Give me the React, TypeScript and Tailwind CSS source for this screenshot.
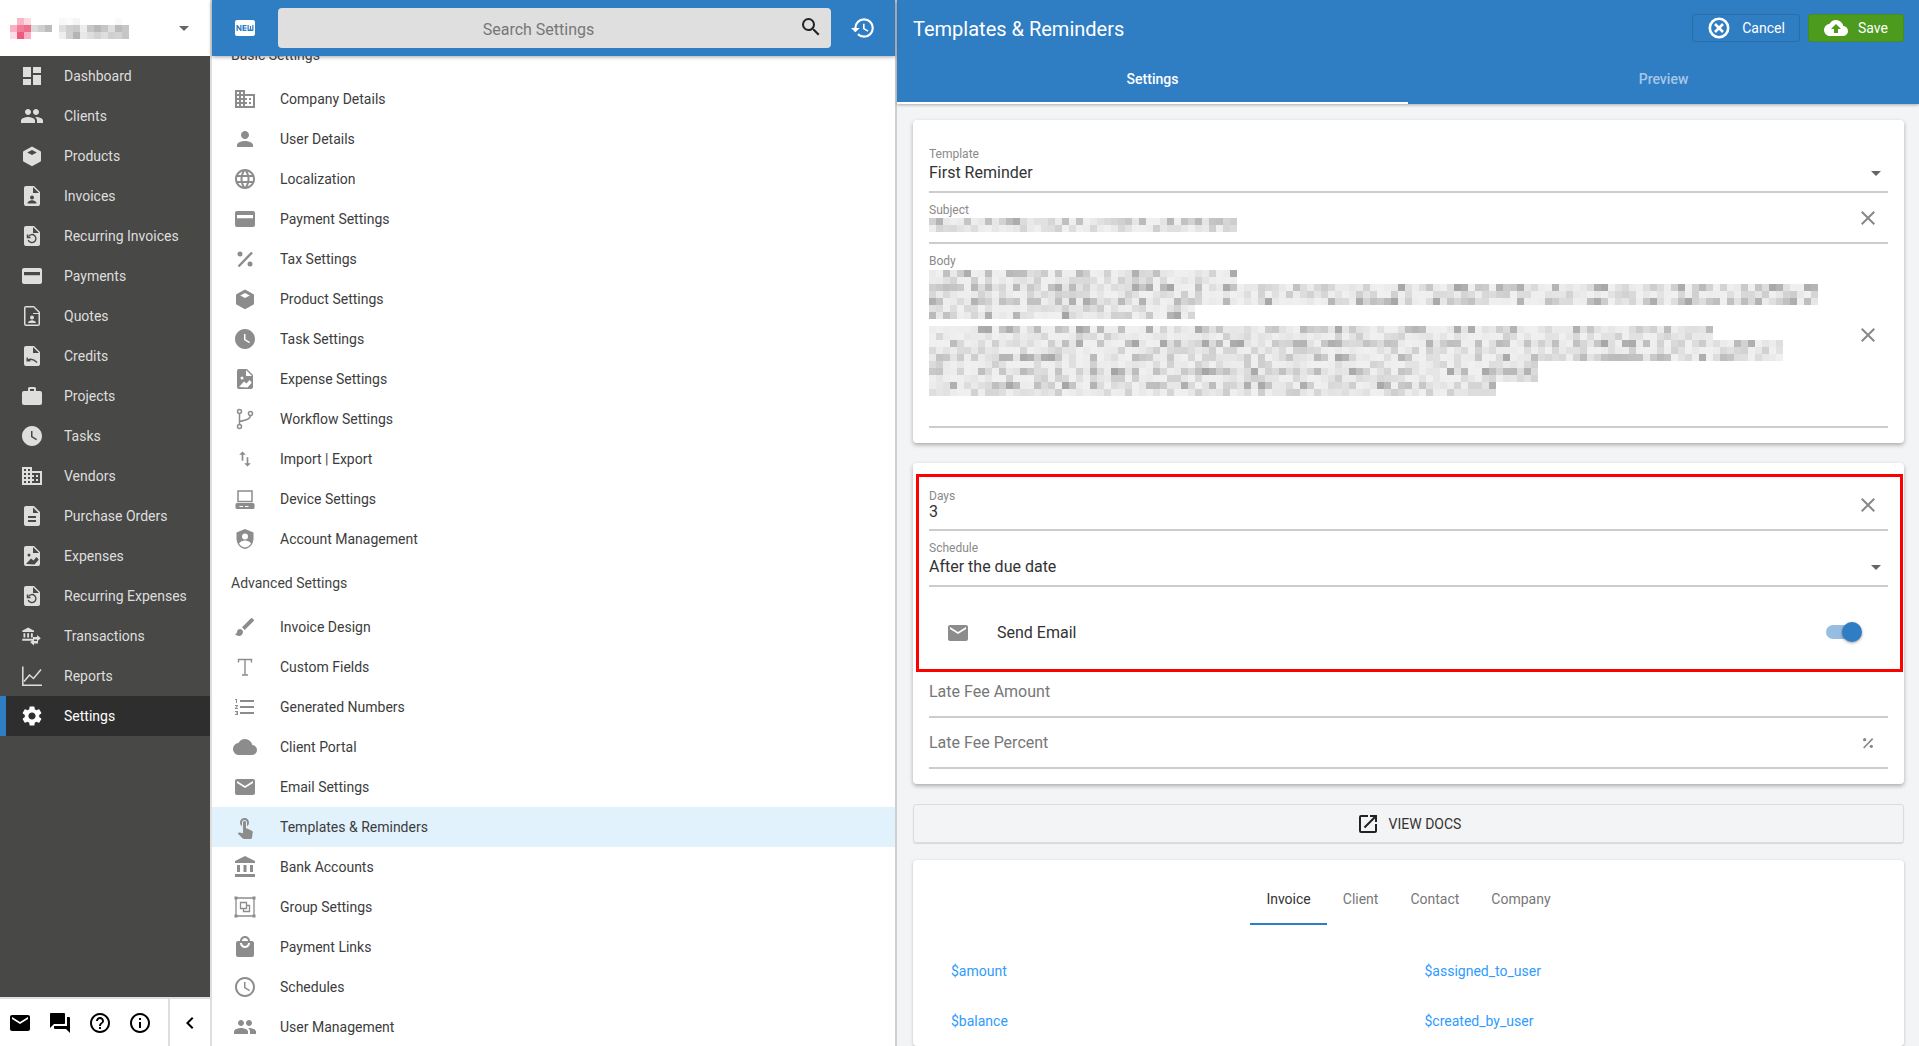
import { useId, type ReactNode } from "react";
import {
  MdAccessTime,
  MdAccountBalance,
  MdArrowDropDown,
  MdBrush,
  MdBusiness,
  MdChevronLeft,
  MdClose,
  MdCloud,
  MdCloudUpload,
  MdDashboard,
  MdDescription,
  MdEmail,
  MdFiberNew,
  MdForum,
  MdFormatListNumbered,
  MdHelpOutline,
  MdHistory,
  MdImportExport,
  MdInfoOutline,
  MdLanguage,
  MdLocalMall,
  MdOpenInNew,
  MdPeople,
  MdPerson,
  MdSearch,
  MdSettings,
  MdTouchApp,
  MdWatchLater,
} from "react-icons/md";

// ---- hand drawn icons, for what the icon packages don't have

function Svg({ children, size = 24 }: { children: ReactNode; size?: number }) {
  return (
    <svg width={size} height={size} viewBox="0 0 24 24" fill="currentColor">
      {children}
    </svg>
  );
}

function Cube() {
  return (
    <Svg>
      <path
        fillRule="evenodd"
        d="M12 2.5l8.2 4.4c.5.3.8.7.8 1.3v8.2c0 .6-.3 1-.8 1.3L12 22.2l-8.2-4.5c-.5-.3-.8-.7-.8-1.3V8.200c0-.6.3-1 .8-1.3L12 2.5zM12 6L7.200 8.500 12 11l4.800-2.500L12 6z"
      />
    </Svg>
  );
}

function Card() {
  return (
    <Svg>
      <path
        fillRule="evenodd"
        d="M4 4h16a2 2 0 0 1 2 2v12a2 2 0 0 1-2 2H4a2 2 0 0 1-2-2V6a2 2 0 0 1 2-2zm0 4v3.200h16V8H4z"
      />
    </Svg>
  );
}

function PercentIcon({ size = 24 }: { size?: number }) {
  return (
    <Svg size={size}>
      <circle cx="7" cy="7" r="2.500" />
      <circle cx="17" cy="17" r="2.500" />
      <path d="M5.500 19.500L19 5.500" stroke="currentColor" strokeWidth="2.400" />
    </Svg>
  );
}

function CancelIcon() {
  return (
    <svg width="24" height="24" viewBox="0 0 24 24" fill="none" stroke="currentColor" strokeWidth="2.600">
      <circle cx="12" cy="12" r="9.200" />
      <path d="M8 8l8 8M16 8l-8 8" />
    </svg>
  );
}

type FileKind = "person" | "framed" | "recurring" | "credit" | "image";

function FileIcon({ kind }: { kind: FileKind }) {
  const id = useId();
  return (
    <Svg>
      <mask id={id}>
        <rect width="24" height="24" fill="#fff" />
        <path d="M13 3v6h6z" fill="#000" />
        {kind === "person" && (
          <>
            <circle cx="12" cy="13.500" r="2" fill="#000" />
            <path d="M7.500 19.500c0-2.200 2.800-3.200 4.500-3.200s4.500 1 4.500 3.200z" fill="#000" />
          </>
        )}
        {kind === "framed" && (
          <>
            <path d="M5.500 3.500H13V10h5.500v10.500h-13z" fill="#000" />
            <circle cx="12" cy="13.500" r="2" fill="#fff" />
            <path d="M8 19c0-2 2.600-2.800 4-2.800s4 .8 4 2.800z" fill="#fff" />
          </>
        )}
        {kind === "recurring" && (
          <g fill="none" stroke="#000" strokeWidth="1.400">
            <path d="M8.500 12.500a4 4 0 1 1-.3 3.500" />
            <path d="M7.500 10.500v3h3" />
          </g>
        )}
        {kind === "credit" && (
          <g fill="none" stroke="#000" strokeWidth="1.400">
            <path d="M7 16.500c3-2 6.500-1.800 10 2" />
            <path d="M7.200 13.500v3.200h3.200" />
          </g>
        )}
        {kind === "image" && (
          <>
            <circle cx="9" cy="11" r="1.500" fill="#000" />
            <path d="M6 20l5-5.500 2.500 2 3-3.500 2 2.200V16l-4 4.500z" fill="#000" />
          </>
        )}
      </mask>
      <path
        mask={`url(#${id})`}
        d="M6 2h8l6 6v12a2 2 0 0 1-2 2H6a2 2 0 0 1-2-2V4a2 2 0 0 1 2-2z"
      />
    </Svg>
  );
}

function Transactions() {
  return (
    <Svg>
      <path
        transform="translate(1 3) scale(.62)"
        d="M4 10v7h3v-7H4zm6 0v7h3v-7h-3zM2 22h19v-3H2v3zm14-12v7h3v-7h-3zm-4.500-9L2 6v2h19V6l-9.500-5z"
      />
      <path d="M17 11l3.800 3.200L17 17.400V15.400h-4v-2.400h4z" />
      <path d="M14 15l-3.800 3.200 3.800 3.200v-2h4V17h-4z" />
    </Svg>
  );
}

function Reports() {
  return (
    <Svg>
      <g fill="none" stroke="currentColor" strokeWidth="1.500">
        <path d="M2.800 2.500v18.700H22" />
        <path d="M4 17.500l5.500-6.500 4 3.500 7.500-9" />
      </g>
    </Svg>
  );
}

function Device() {
  return (
    <Svg>
      <path d="M5 4h14v10.500H5z" fill="none" stroke="currentColor" strokeWidth="1.500" />
      <path
        fillRule="evenodd"
        d="M4 16h16a1.500 1.500 0 0 1 1.500 1.500v3A1.500 1.500 0 0 1 20 22H4a1.500 1.500 0 0 1-1.500-1.500v-3A1.500 1.500 0 0 1 4 16zm2.500 3v1H10v-1H6.500zm5.500 0v1h3.500v-1H12z"
      />
    </Svg>
  );
}

function Shield() {
  const id = useId();
  return (
    <Svg>
      <mask id={id}>
        <rect width="24" height="24" fill="#fff" />
        <circle cx="12" cy="9.500" r="3" fill="#000" />
        <path
          d="M6 16.800c1-2.300 3.800-3.200 6-3.200s5 .9 6 3.200c-1.300 1.900-3.500 3.300-6 3.800-2.500-.5-4.700-1.900-6-3.800z"
          fill="#000"
        />
      </mask>
      <path mask={`url(#${id})`} d="M12 2l8.500 3.400v6c0 5.200-3.600 9.600-8.500 10.600-4.900-1-8.500-5.400-8.500-10.600v-6z" />
    </Svg>
  );
}

function Serif() {
  return (
    <Svg>
      <path
        d="M5.500 7.500V4.500h13v3M12 4.500v15.500M9 20h6"
        fill="none"
        stroke="currentColor"
        strokeWidth="1.400"
      />
    </Svg>
  );
}

function GroupBox() {
  return (
    <Svg>
      <g fill="none" stroke="currentColor" strokeWidth="1.300">
        <path d="M3 3h18v18H3z" />
        <path d="M7.500 7.500h6v6h-6z" />
        <path d="M10.500 13.500v3h6v-6h-3" />
      </g>
      <path d="M1.500 1.500h3v3h-3zM19.500 1.500h3v3h-3zM1.500 19.500h3v3h-3zM19.500 19.500h3v3h-3z" />
    </Svg>
  );
}

function Branch() {
  return (
    <Svg>
      <g fill="none" stroke="currentColor" strokeWidth="1.500">
        <circle cx="6.500" cy="4.500" r="2" />
        <circle cx="6.500" cy="19.500" r="2" />
        <circle cx="17.500" cy="6.500" r="2" />
        <path d="M6.500 6.500v11M17.500 8.500c0 3.500-4 4.500-11 6" />
      </g>
    </Svg>
  );
}

function Briefcase() {
  return (
    <Svg>
      <path
        fillRule="evenodd"
        d="M4 7h4V4.500A1.500 1.500 0 0 1 9.500 3h5A1.500 1.500 0 0 1 16 4.500V7h4a2 2 0 0 1 2 2v10a2 2 0 0 1-2 2H4a2 2 0 0 1-2-2V9a2 2 0 0 1 2-2zm6-2v2h4V5h-4z"
      />
    </Svg>
  );
}

// ---- blurred (pixelated) parts of the screenshot

function Mosaic({ rows, seed, width }: { rows: number[]; seed: number; width: number }) {
  const cell = 7;
  let s = seed;
  const next = () => {
    s = (s * 9301 + 49297) % 233280;
    return s / 233280;
  };
  const cells: ReactNode[] = [];
  rows.forEach((w, y) => {
    const strength = y % 2 === 0 ? 75 : 35;
    for (let x = 0; x * cell < w; x++) {
      const r = next();
      const g = Math.round(252 - r * r * strength - 12);
      cells.push(
        <rect
          key={`${x}-${y}`}
          x={x * cell}
          y={y * cell}
          width={cell}
          height={cell}
          fill={`rgb(${g},${g},${g})`}
        />,
      );
    }
  });
  return (
    <svg width={width} height={rows.length * cell} shapeRendering="crispEdges" className="block">
      {cells}
    </svg>
  );
}

function Logo() {
  const pink = [
    [null, "#f9b6c6", "#fcd9e1", null, null, null],
    ["#f9b0c2", "#f27e9a", "#ef6f8f", "#dcdcdc", "#cfcfcf", "#bcbcbc"],
    ["#fcdde4", "#ee5a7e", "#f9b0c2", null, null, null],
  ];
  const grey = [
    ["#f8f8f8", "#fbfbfb", "#f5f5f5", "#fff", "#fff", "#fff", "#fff", "#fff", "#fafafa", "#fff"],
    ["#dedede", "#cfcfcf", "#cacaca", "#ededed", "#c6c6c6", "#b8b8b8", "#c6c6c6", "#dedede", "#bbb", "#c6c6c6"],
    ["#eee", "#d0d0d0", "#b4b4b4", "#e8e8e8", "#dedede", "#d3d3d3", "#dedede", "#cfcfcf", "#d3d3d3", "#c6c6c6"],
  ];
  return (
    <div className="flex gap-[7px]">
      <div className="grid grid-cols-[repeat(6,7px)] auto-rows-[7px]">
        {pink.flat().map((c, i) => (
          <div key={i} style={{ backgroundColor: c ?? "transparent" }} />
        ))}
      </div>
      <div className="grid grid-cols-[repeat(10,7px)] auto-rows-[7px]">
        {grey.flat().map((c, i) => (
          <div key={i} style={{ backgroundColor: c }} />
        ))}
      </div>
    </div>
  );
}

// ---- data

const navItems: { label: string; icon: ReactNode }[] = [
  { label: "Dashboard", icon: <MdDashboard size={24} /> },
  { label: "Clients", icon: <MdPeople size={24} /> },
  { label: "Products", icon: <Cube /> },
  { label: "Invoices", icon: <FileIcon kind="person" /> },
  { label: "Recurring Invoices", icon: <FileIcon kind="recurring" /> },
  { label: "Payments", icon: <Card /> },
  { label: "Quotes", icon: <FileIcon kind="framed" /> },
  { label: "Credits", icon: <FileIcon kind="credit" /> },
  { label: "Projects", icon: <Briefcase /> },
  { label: "Tasks", icon: <MdWatchLater size={24} /> },
  { label: "Vendors", icon: <MdBusiness size={24} /> },
  { label: "Purchase Orders", icon: <MdDescription size={24} /> },
  { label: "Expenses", icon: <FileIcon kind="image" /> },
  { label: "Recurring Expenses", icon: <FileIcon kind="recurring" /> },
  { label: "Transactions", icon: <Transactions /> },
  { label: "Reports", icon: <Reports /> },
];

const basicSettings: { label: string; icon: ReactNode }[] = [
  { label: "Company Details", icon: <MdBusiness size={24} /> },
  { label: "User Details", icon: <MdPerson size={24} /> },
  { label: "Localization", icon: <MdLanguage size={24} /> },
  { label: "Payment Settings", icon: <Card /> },
  { label: "Tax Settings", icon: <PercentIcon /> },
  { label: "Product Settings", icon: <Cube /> },
  { label: "Task Settings", icon: <MdWatchLater size={24} /> },
  { label: "Expense Settings", icon: <FileIcon kind="image" /> },
  { label: "Workflow Settings", icon: <Branch /> },
  { label: "Import | Export", icon: <MdImportExport size={20} /> },
  { label: "Device Settings", icon: <Device /> },
  { label: "Account Management", icon: <Shield /> },
];

const advancedSettings: { label: string; icon: ReactNode; active?: boolean }[] = [
  { label: "Invoice Design", icon: <MdBrush size={24} /> },
  { label: "Custom Fields", icon: <Serif /> },
  { label: "Generated Numbers", icon: <MdFormatListNumbered size={24} /> },
  { label: "Client Portal", icon: <MdCloud size={24} /> },
  { label: "Email Settings", icon: <MdEmail size={24} /> },
  { label: "Templates & Reminders", icon: <MdTouchApp size={24} />, active: true },
  { label: "Bank Accounts", icon: <MdAccountBalance size={24} /> },
  { label: "Group Settings", icon: <GroupBox /> },
  { label: "Payment Links", icon: <MdLocalMall size={24} /> },
  { label: "Schedules", icon: <MdAccessTime size={24} /> },
  { label: "User Management", icon: <MdPeople size={24} /> },
];

function SettingsRow({ label, icon, active }: { label: string; icon: ReactNode; active?: boolean }) {
  return (
    <div className={`h-10 flex items-center ${active ? "bg-[#e1f2fc]" : ""}`}>
      <div className="w-[64px] flex justify-center pl-[2px] text-[#8c8c8c] shrink-0">{icon}</div>
      <span className="ml-[4px] text-sm text-[#3c3c3c]">{label}</span>
    </div>
  );
}

function Label({ children }: { children: ReactNode }) {
  return <div className="text-xs leading-[14px] text-[#8a8a8a]">{children}</div>;
}

function ClearIcon() {
  return <MdClose size={24} className="text-[#888] mr-[8px] shrink-0" />;
}

function DropArrow() {
  return <MdArrowDropDown size={24} className="text-[#666] shrink-0" />;
}

export default function App() {
  return (
    <div className="flex h-screen overflow-hidden bg-white text-[#333] font-['Roboto',sans-serif]">
      {/* Sidebar */}
      <aside className="w-[212px] shrink-0 flex flex-col border-r-2 border-[#dedede] bg-[#484846]">
        <div className="h-14 shrink-0 bg-white flex items-center justify-between pl-[10px] pr-[14px]">
          <Logo />
          <MdArrowDropDown size={24} className="text-[#666]" />
        </div>
        <nav className="flex-1">
          {navItems.map((item) => (
            <div key={item.label} className="h-10 flex items-center text-[#dedede]">
              <div className="w-[64px] flex justify-center shrink-0">{item.icon}</div>
              <span className="text-sm">{item.label}</span>
            </div>
          ))}
          <div className="h-10 flex items-center bg-[#2e2e2e] text-white border-l-[6px] border-[#2f7dc3]">
            <div className="w-[52px] flex justify-center shrink-0">
              <MdSettings size={24} />
            </div>
            <span className="ml-[6px] text-sm">Settings</span>
          </div>
        </nav>
        <div className="h-[49px] shrink-0 bg-white border-t-2 border-[#dedede] flex items-center text-black">
          <div className="w-[170px] flex items-center justify-around pt-[1px] pr-[8px] border-r-2 border-[#dedede] h-full">
            <MdEmail size={24} />
            <MdForum size={24} />
            <MdHelpOutline size={24} />
            <MdInfoOutline size={24} />
          </div>
          <div className="flex-1 flex justify-center">
            <MdChevronLeft size={24} />
          </div>
        </div>
      </aside>

      {/* Settings list */}
      <section className="w-[685px] shrink-0 flex flex-col border-r-2 border-[#cfcfcf]">
        <header className="relative z-10 h-14 shrink-0 bg-[#2f7dc3] flex items-center shadow-[0_1px_4px_rgba(0,0,0,0.35)]">
          <div className="w-[66px] flex justify-center text-white">
            <MdFiberNew size={24} />
          </div>
          <div className="w-[553px] h-10 bg-[#dfdfdf] rounded-sm flex items-center justify-center pt-[3px] pr-[32px] relative">
            <span className="text-base text-[#777]">Search Settings</span>
            <MdSearch size={24} className="absolute right-[8px] top-[7px] text-[#222]" />
          </div>
          <div className="flex-1 flex justify-center text-white">
            <MdHistory size={26} />
          </div>
        </header>
        <div className="-mt-[25px] overflow-hidden">
          <div className="h-12 flex items-center pl-[19px] text-sm text-[#444]">Basic Settings</div>
          {basicSettings.map((row) => (
            <SettingsRow key={row.label} {...row} />
          ))}
          <div className="h-12 flex items-center pl-[19px] text-sm text-[#444]">Advanced Settings</div>
          {advancedSettings.map((row) => (
            <SettingsRow key={row.label} {...row} />
          ))}
        </div>
      </section>

      {/* Editor */}
      <main className="flex-1 min-w-0 flex flex-col bg-[#f3f4f6]">
        <header className="h-[104px] shrink-0 bg-[#2f7dc3] shadow-[0_1px_3px_rgba(0,0,0,0.3)] text-white">
          <div className="h-14 flex items-center justify-between pl-[16px] pr-[15px]">
            <h1 className="text-xl font-normal pt-[2px]">Templates &amp; Reminders</h1>
            <div className="flex gap-[8px]">
              <button className="w-[108px] h-[28px] rounded-[3px] border border-[#2a6ea9] flex items-center justify-center gap-[11px] text-sm">
                <CancelIcon />
                Cancel
              </button>
              <button className="w-[96px] h-[28px] rounded-[3px] bg-[#4c9a1e] border border-[#468c1c] flex items-center justify-center gap-[10px] text-sm">
                <MdCloudUpload size={24} />
                Save
              </button>
            </div>
          </div>
          <div className="h-[48px] grid grid-cols-2 text-sm font-medium">
            <div className="flex items-center justify-center border-b-2 border-white">Settings</div>
            <div className="flex items-center justify-center pb-[2px] text-[#a6c8e8]">Preview</div>
          </div>
        </header>

        <div className="flex-1 overflow-hidden pt-[16px] pl-[16px] pr-[15px]">
          {/* Template card */}
          <div className="bg-white rounded-sm px-[16px] pb-[15px] shadow-[0_2px_4px_rgba(0,0,0,0.3)]">
            <div className="h-[73px] pt-[27px] border-b-2 border-[#ccc]">
              <Label>Template</Label>
              <div className="mt-[2px] h-5 flex items-center justify-between">
                <span className="text-base text-[#333]">First Reminder</span>
                <DropArrow />
              </div>
            </div>
            <div className="h-[51px] border-b-2 border-[#ccc] flex items-center justify-between">
              <div>
                <Label>Subject</Label>
                <div className="mt-px">
                  <Mosaic rows={[302, 302]} seed={11} width={310} />
                </div>
              </div>
              <ClearIcon />
            </div>
            <div className="h-[184px] pt-[10px] border-b-2 border-[#ccc] flex items-center justify-between">
              <div className="self-start">
                <Label>Body</Label>
                <div className="mt-[2px]">
                  <Mosaic
                    rows={[307, 307, 887, 887, 887, 263, 263, 0, 782, 782, 851, 851, 851, 604, 604, 604, 565, 565]}
                    seed={77}
                    width={900}
                  />
                </div>
              </div>
              <div className="-mt-[10px]">
                <ClearIcon />
              </div>
            </div>
          </div>

          {/* Schedule card */}
          <div className="relative mt-[20px] bg-white rounded-sm px-[16px] pb-[15px] shadow-[0_2px_4px_rgba(0,0,0,0.3)]">
            <div className="h-[68px] pt-[18px] border-b-2 border-[#ccc] flex items-center justify-between">
              <div className="self-start pt-[8px]">
                <Label>Days</Label>
                <div className="text-base leading-[18px] text-[#333]">3</div>
              </div>
              <ClearIcon />
            </div>
            <div className="h-[56px] pt-[10px] border-b-2 border-[#ccc]">
              <Label>Schedule</Label>
              <div className="mt-[2px] h-5 flex items-center justify-between">
                <span className="text-base text-[#333]">After the due date</span>
                <DropArrow />
              </div>
            </div>
            <div className="h-[90px] flex items-center justify-between">
              <div className="flex items-center pt-[2px]">
                <div className="w-[56px] flex justify-center pl-[1px] text-[#8c8c8c]">
                  <MdEmail size={24} />
                </div>
                <span className="ml-[12px] text-base text-[#333]">Send Email</span>
              </div>
              <div className="relative w-[36px] h-[20px] mr-[26px] flex items-center">
                <div className="w-[30px] h-[14px] rounded-full bg-[#98bde2]" />
                <div className="absolute right-0 w-5 h-5 rounded-full bg-[#2f7dc3] shadow-[0_1px_3px_rgba(0,0,0,0.4)]" />
              </div>
            </div>
            <div className="h-[41px] pt-[3px] border-b-2 border-[#ccc] text-base text-[#777]">Late Fee Amount</div>
            <div className="h-[51px] border-b-2 border-[#ccc] flex items-center justify-between text-base text-[#777]">
              Late Fee Percent
              <div className="text-[#888] mr-[12px] flex">
                <PercentIcon size={16} />
              </div>
            </div>
            {/* annotation frame of the screenshot */}
            <div className="absolute left-[3px] right-[1px] top-[11px] h-[198px] border-[3px] border-[#ff0000] pointer-events-none" />
          </div>

          <button className="mt-[20px] w-full h-[39px] rounded-[3px] border border-[#dcdcdc] shadow-[0_1px_1px_rgba(0,0,0,0.12)] flex items-center justify-center gap-[9px] text-sm text-[#333]">
            <MdOpenInNew size={24} className="text-[#222]" />
            VIEW DOCS
          </button>

          {/* Variables card */}
          <div className="mt-[17px] bg-white rounded-sm pt-[15px] shadow-[0_1px_3px_rgba(0,0,0,0.25)]">
            <div className="flex justify-center text-sm text-[#777]">
              <div className="h-[50px] px-4 flex items-center pb-[1px] border-b-2 border-[#2f7dc3] text-[#333]">Invoice</div>
              <div className="h-[50px] px-4 flex items-center pb-[3px]">Client</div>
              <div className="h-[50px] px-4 flex items-center pb-[3px]">Contact</div>
              <div className="h-[50px] px-4 flex items-center pb-[3px]">Company</div>
            </div>
            <div className="grid grid-cols-2 auto-rows-[50px] items-center pl-[38px] pr-[6px] mt-[21px] text-sm text-[#2f9bff]">
              <span>$amount</span>
              <span>$assigned_to_user</span>
              <span>$balance</span>
              <span>$created_by_user</span>
            </div>
          </div>
        </div>
      </main>
    </div>
  );
}
